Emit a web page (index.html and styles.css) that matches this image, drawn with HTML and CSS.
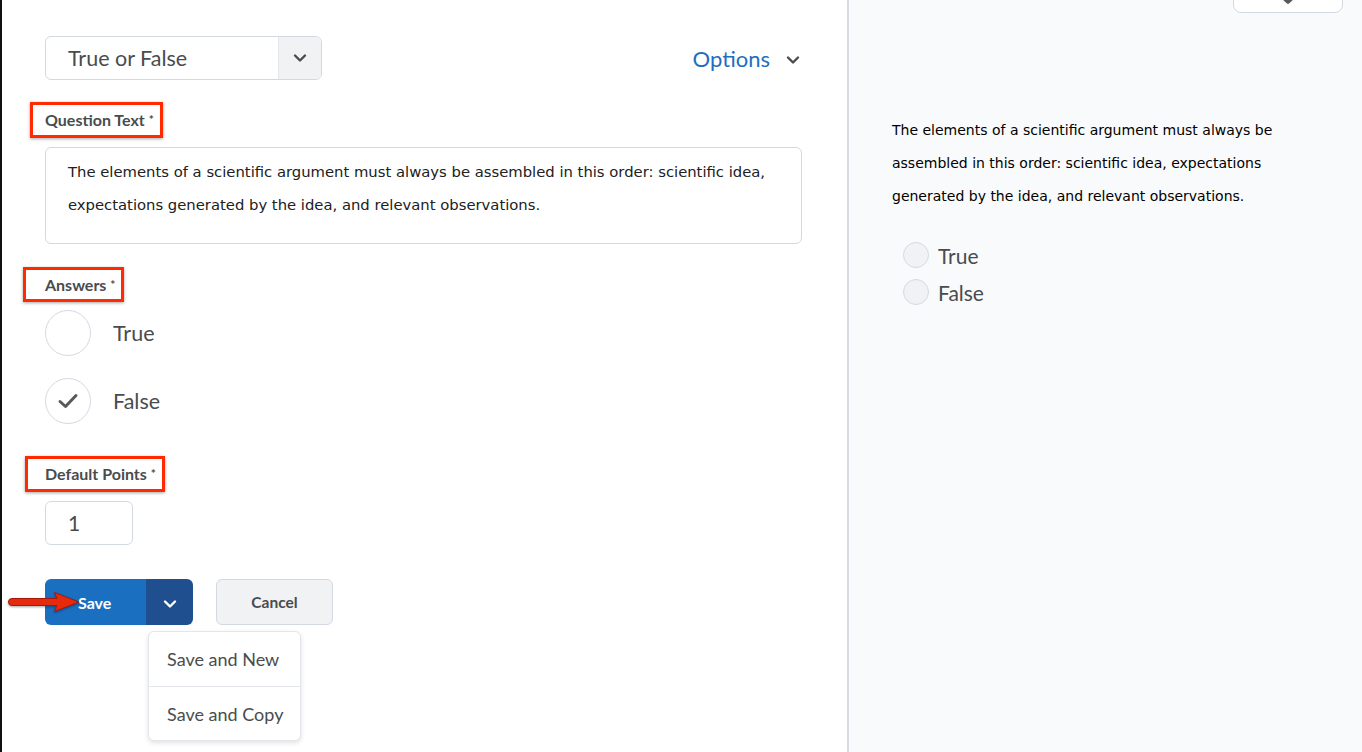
FILE: index.html
```html
<!DOCTYPE html>
<html lang="en">
<head>
<meta charset="utf-8">
<title>True or False question</title>
<link rel="stylesheet" href="styles.css">
</head>
<body>
<div class="page">
  <main class="editor">
    <div class="top-row">
      <div class="select">
        <span class="select-value">True or False</span>
        <span class="select-btn">
          <svg width="14" height="10" viewBox="0 0 14 10"><path d="M2 2.5 L7 7.5 L12 2.5" fill="none" stroke="#494c4e" stroke-width="2.4" stroke-linecap="round" stroke-linejoin="round"/></svg>
        </span>
      </div>
      <div class="options">
        <span class="options-text">Options</span>
        <svg width="14" height="10" viewBox="0 0 14 10"><path d="M2 2.5 L7 7.5 L12 2.5" fill="none" stroke="#494c4e" stroke-width="2.4" stroke-linecap="round" stroke-linejoin="round"/></svg>
      </div>
    </div>

    <div class="label-wrap"><span class="label mark mark-q">Question Text <span class="req">*</span></span></div>
    <div class="textarea">The elements of a scientific argument must always be assembled in this order: scientific idea,<br>expectations generated by the idea, and relevant observations.</div>

    <div class="label-wrap"><span class="label mark mark-a">Answers <span class="req">*</span></span></div>
    <div class="answers">
      <div class="answer">
        <span class="check"></span>
        <span class="answer-text">True</span>
      </div>
      <div class="answer">
        <span class="check">
          <svg width="22" height="18" viewBox="0 0 22 18"><path d="M3 9.5 L8.5 14.5 L19 3.5" fill="none" stroke="#565a5c" stroke-width="3" stroke-linecap="round" stroke-linejoin="round"/></svg>
        </span>
        <span class="answer-text">False</span>
      </div>
    </div>

    <div class="label-wrap"><span class="label mark mark-p">Default Points <span class="req">*</span></span></div>
    <div class="points">1</div>

    <div class="actions">
      <div class="split">
        <button class="save">Save</button>
        <button class="save-more">
          <svg width="14" height="10" viewBox="0 0 14 10"><path d="M2 2.5 L7 7.5 L12 2.5" fill="none" stroke="#ffffff" stroke-width="2.4" stroke-linecap="round" stroke-linejoin="round"/></svg>
        </button>
        <div class="menu">
          <div class="menu-item">Save and New</div>
          <div class="menu-item">Save and Copy</div>
        </div>
      </div>
      <button class="cancel">Cancel</button>
      <svg class="arrow" width="76" height="24" viewBox="0 0 76 24">
        <path d="M6 8.5 L51 8.5 L48.5 2.5 L73 12 L48.5 21.5 L51 15.5 L6 15.5 Q2.5 15.5 2.5 12 Q2.5 8.5 6 8.5 Z" fill="#e62a0e" stroke="#a8180a" stroke-width="1" stroke-linejoin="round"/>
      </svg>
    </div>
  </main>

  <aside class="preview">
    <div class="preview-top">
      <div class="ghost-btn">
        <svg width="18" height="10" viewBox="0 0 18 10"><path d="M2 1 L9 7.5 L16 1" fill="none" stroke="#565a5c" stroke-width="3" stroke-linecap="round" stroke-linejoin="round"/></svg>
      </div>
    </div>
    <p class="preview-text">The elements of a scientific argument must always be<br>assembled in this order: scientific idea, expectations<br>generated by the idea, and relevant observations.</p>
    <div class="radios">
      <label class="radio"><span class="dot"></span><span class="radio-text">True</span></label>
      <label class="radio"><span class="dot"></span><span class="radio-text">False</span></label>
    </div>
  </aside>
</div>
</body>
</html>
```

FILE: styles.css
```css
* { box-sizing: border-box; }
html, body { margin: 0; padding: 0; height: 100%; }
body {
  font-family: Lato, "Open Sans", sans-serif;
  color: #494c4e;
  background: #ffffff;
  overflow: hidden;
}
.page {
  display: flex;
  height: 752px;
  border-left: 2px solid #111;
}
.editor {
  width: 845px;
  flex: none;
  padding: 36px 0 0 43px;
  background: #fff;
}
.top-row {
  width: 757px;
  display: flex;
  justify-content: space-between;
  align-items: center;
}
.select {
  width: 277px;
  height: 44px;
  border: 1px solid #d3d9e3;
  border-radius: 6px;
  display: flex;
  overflow: hidden;
}
.select-value {
  flex: 1;
  padding-left: 22px;
  font-size: 21.5px;
  line-height: 42px;
  color: #494c4e;
}
.select-btn {
  width: 43px;
  background: #f1f2f4;
  border-left: 1px solid #e3e6ea;
  display: flex;
  align-items: center;
  justify-content: center;
}
.options {
  display: flex;
  align-items: center;
  gap: 16px;
  padding-right: 2px;
}
.options svg { margin-top: 4px; }
.options-text {
  font-size: 22px;
  color: #1c6fc0;
}
.label-wrap { display: flex; }
.label {
  font-weight: 700;
  font-size: 16px;
  line-height: 18px;
  color: #494c4e;
}
.req { font-weight: 700; font-size: 12px; vertical-align: 2px; }
.mark {
  border: 3px solid #ff2a00;
  box-shadow: 0 1px 3px rgba(0,0,0,0.35);
  padding: 6px 6px 6px 0;
}
.mark-q { margin: 22px 0 9px -15px; padding-left: 12px; height: 36px; }
.mark-a { margin: 23px 0 8px -22px; padding-left: 19px; height: 35px; }
.mark-p { margin: 32px 0 9px -20px; padding-left: 17px; height: 36px; }
.textarea {
  width: 757px;
  height: 97px;
  border: 1px solid #d3d9e3;
  border-radius: 6px;
  padding: 7px 22px 0 22px;
  font-family: "DejaVu Sans", Verdana, sans-serif;
  font-size: 14.8px;
  line-height: 33px;
  color: #202122;
}
.answers { display: flex; flex-direction: column; gap: 22px; }
.answer { display: flex; align-items: center; gap: 22px; }
.check {
  width: 46px;
  height: 46px;
  border: 1px solid #d3d9e3;
  border-radius: 50%;
  display: flex;
  align-items: center;
  justify-content: center;
  background: #fff;
}
.answer-text { font-size: 21.5px; color: #494c4e; }
.points {
  width: 88px;
  height: 44px;
  border: 1px solid #d3d9e3;
  border-radius: 6px;
  padding-left: 22px;
  font-size: 21px;
  line-height: 42px;
  color: #494c4e;
}
.actions {
  position: relative;
  margin-top: 34px;
  display: flex;
  gap: 23px;
  align-items: flex-start;
}
.arrow {
  position: absolute;
  left: -39px;
  top: 11px;
  z-index: 2;
  filter: drop-shadow(0 1px 1px rgba(0,0,0,0.35));
}
.split { position: relative; display: flex; height: 46px; }
button { font-family: Lato, "Open Sans", sans-serif; cursor: pointer; }
.save {
  width: 101px;
  height: 46px;
  border: none;
  border-radius: 6px 0 0 6px;
  background: #1a6fc0;
  color: #fff;
  font-weight: 700;
  font-size: 16px;
  text-align: left;
  padding: 0 0 0 33px;
}
.save-more {
  width: 47px;
  height: 46px;
  border: none;
  border-radius: 0 6px 6px 0;
  background: #1f4f8f;
  display: flex;
  align-items: center;
  justify-content: center;
  padding: 3px 0 0 0;
}
.cancel {
  width: 117px;
  height: 46px;
  border: 1px solid #d3d9e3;
  border-radius: 6px;
  background: #f1f2f4;
  color: #494c4e;
  font-weight: 700;
  font-size: 15.5px;
}
.menu {
  position: absolute;
  left: 103px;
  top: 52px;
  width: 153px;
  background: #fff;
  border: 1px solid #e3e6ea;
  border-radius: 6px;
  box-shadow: 0 2px 5px rgba(0,0,0,0.12);
}
.menu-item {
  height: 54px;
  padding-left: 18px;
  font-size: 18px;
  line-height: 54px;
  color: #494c4e;
}
.menu-item + .menu-item { border-top: 1px solid #e3e6ea; }
.preview {
  flex: 1;
  background: #f9fafb;
  border-left: 2px solid #d6dae1;
  padding: 0 19px 0 43px;
}
.preview-top {
  display: flex;
  justify-content: flex-end;
  margin-top: -31px;
}
.ghost-btn {
  width: 110px;
  height: 44px;
  border: 1px solid #d3d9e3;
  border-radius: 8px;
  background: #fff;
  display: flex;
  justify-content: center;
  align-items: flex-end;
  padding-bottom: 7px;
}
.preview-text {
  margin: 101px 0 0 0;
  font-family: "DejaVu Sans", Verdana, sans-serif;
  font-size: 14px;
  line-height: 33px;
  color: #000;
}
.radios {
  margin-top: 29px;
  padding-left: 11px;
  display: flex;
  flex-direction: column;
  gap: 11px;
}
.radio { display: flex; align-items: center; gap: 9px; }
.dot {
  width: 26px;
  height: 26px;
  border-radius: 50%;
  border: 1px solid #d3d9e3;
  background: #f1f2f4;
}
.radio-text { font-size: 21px; color: #494c4e; }
```
